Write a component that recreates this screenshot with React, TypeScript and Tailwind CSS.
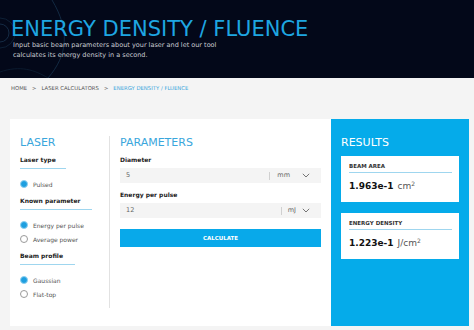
import React from "react";

const font = { fontFamily: '"DejaVu Sans", "Noto Sans", sans-serif' };

function Radio({ checked, label }: { checked?: boolean; label: string }) {
  return (
    <div className="flex items-center gap-[5px] h-[14px]">
      {checked ? (
        <span className="w-[8px] h-[8px] rounded-full bg-[#1e9fe0] border border-[#8fd0f0]" />
      ) : (
        <span className="w-[8px] h-[8px] rounded-full border border-[#9a9a9a] bg-white" />
      )}
      <span className="text-[6px] text-[#555]">{label}</span>
    </div>
  );
}

function Group({ title, line, children }: { title: string; line: string; children: React.ReactNode }) {
  return (
    <div className="flex flex-col">
      <div className="text-[6px] font-bold text-[#222] leading-[10px]">{title}</div>
      <div className={`h-px bg-[#9fd6ef] mt-[3px] ${line}`} />
      <div className="flex flex-col mt-[8px]">{children}</div>
    </div>
  );
}

function Field({ label, value, unit, sepClass, chevClass }: { label: string; value: string; unit: string; sepClass: string; chevClass: string }) {
  return (
    <div className="flex flex-col">
      <div className="text-[6px] font-bold text-[#222] leading-[10px]">{label}</div>
      <div className="mt-[3px] h-[15px] bg-[#f4f4f4] flex items-center pl-[6px] pr-[11px]">
        <span className="text-[6.5px] text-[#666] flex-1">{value}</span>
        <span className={`w-px h-[8px] bg-[#d0d0d0] ${sepClass}`} />
        <span className="text-[6.5px] text-[#666]">{unit}</span>
        <svg width="8" height="5" viewBox="0 0 8 5" className={chevClass}>
          <path d="M0.8 0.8 L4 4 L7.2 0.8" fill="none" stroke="#666" strokeWidth="0.9" />
        </svg>
      </div>
    </div>
  );
}

function ResultCard({ title, value, unit }: { title: string; value: string; unit: string }) {
  return (
    <div className="bg-white h-[46px] px-[8px] pt-[6px] flex flex-col">
      <div className="text-[5.5px] font-bold text-[#333] leading-[8px]">{title}</div>
      <div className="h-px bg-[#9fd6ef] mt-[2px] mr-[-1px]" />
      <div className="mt-[7px] flex items-baseline gap-[4px]">
        <span className="text-[9px] font-bold text-[#111]">{value}</span>
        <span className="text-[9px] text-[#555]">
          {unit}
          <sup className="text-[6px]">2</sup>
        </span>
      </div>
    </div>
  );
}

export default function App() {
  return (
    <div className="w-[474px] h-[330px] overflow-hidden bg-[#f4f4f4] flex flex-col" style={font}>
      <header className="relative h-[78px] bg-[#030819] px-[11px] pt-[17px] overflow-hidden">
        <svg className="absolute left-0 top-0" width="160" height="78" viewBox="0 0 160 78">
          <circle cx="0" cy="33" r="9" fill="none" stroke="#1b3550" strokeWidth="0.8" />
          <circle cx="0" cy="33" r="15" fill="none" stroke="#15304a" strokeWidth="0.6" />
          <path d="M52 0 C 70 30, 68 55, 48 78" fill="none" stroke="#16324c" strokeWidth="0.8" />
          <path d="M0 72 C 20 65, 35 70, 48 78" fill="none" stroke="#10263c" strokeWidth="0.6" />
        </svg>
        <div className="relative">
          <div className="text-[21px] leading-[24px] text-[#1ea6e2]">ENERGY DENSITY / FLUENCE</div>
          <div className="pl-[2px] text-[6.5px] leading-[9.5px] text-[#c9ccd3]">
            Input basic beam parameters about your laser and let our tool
            <br />
            calculates its energy density in a second.
          </div>
        </div>
      </header>
      <div className="px-[11px] pt-[7px] h-[41px] text-[5.3px] text-[#555] flex gap-[5px]">
        <span>HOME</span>
        <span>&gt;</span>
        <span>LASER CALCULATORS</span>
        <span>&gt;</span>
        <span className="text-[#3aa6dc]">ENERGY DENSITY / FLUENCE</span>
      </div>
      <div className="flex pl-[10px] h-[207px]">
        <div className="w-[321px] bg-white flex pt-[17px] pb-[18px]">
          <div className="w-[100px] pl-[10px] flex flex-col border-r border-[#e2e2e2]">
            <div className="text-[11px] leading-[13px] text-[#3aa6dc]">LASER</div>
            <div className="mt-[6px] flex flex-col gap-[5px]">
              <Group title="Laser type" line="w-[46px]">
                <Radio checked label="Pulsed" />
              </Group>
              <Group title="Known parameter" line="w-[72px]">
                <Radio checked label="Energy per pulse" />
                <Radio label="Average power" />
              </Group>
              <Group title="Beam profile" line="w-[55px]">
                <Radio checked label="Gaussian" />
                <Radio label="Flat-top" />
              </Group>
            </div>
          </div>
          <div className="flex-1 px-[10px] flex flex-col">
            <div className="text-[11px] leading-[13px] text-[#3aa6dc]">PARAMETERS</div>
            <div className="mt-[6px] flex flex-col gap-[7px]">
              <Field label="Diameter" value="5" unit="mm" sepClass="mr-[7px]" chevClass="ml-[12px]" />
              <Field label="Energy per pulse" value="12" unit="mJ" sepClass="mr-[6px]" chevClass="ml-[6px]" />
            </div>
            <div className="mt-[11px] h-[18px] bg-[#08a9ea] flex items-center justify-center text-white text-[5.5px] font-bold">
              CALCULATE
            </div>
          </div>
        </div>
        <div className="w-[138px] bg-[#05abea] px-[10px] pt-[17px] flex flex-col">
          <div className="text-[11px] leading-[13px] text-white">RESULTS</div>
          <div className="mt-[7px] flex flex-col gap-[11px]">
            <ResultCard title="BEAM AREA" value="1.963e-1" unit="cm" />
            <ResultCard title="ENERGY DENSITY" value="1.223e-1" unit="J/cm" />
          </div>
        </div>
      </div>
    </div>
  );
}
